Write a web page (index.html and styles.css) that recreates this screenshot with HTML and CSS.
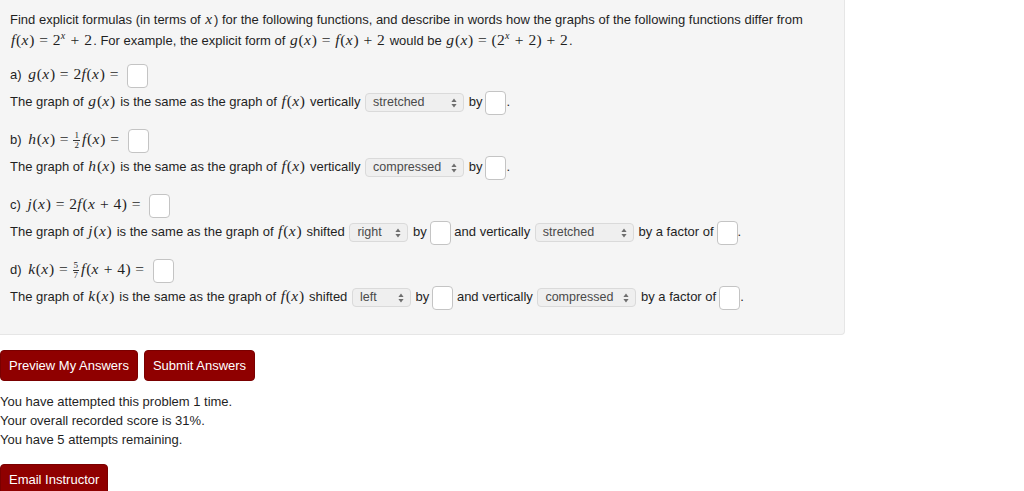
FILE: index.html
```html
<!DOCTYPE html>
<html>
<head>
<meta charset="utf-8">
<link rel="stylesheet" href="styles.css">
</head>
<body>
<div class="problem">
  <p class="intro">Find explicit formulas (in terms of <span class="m"><i>x</i></span>) for the following functions, and describe in words how the graphs of the following functions differ from<br><span class="m"><i>f</i>(<i>x</i>)<span class="op">=</span>2<sup><i>x</i></sup><span class="op">+</span>2</span>. For example, the explicit form of <span class="m"><i>g</i>(<i>x</i>)<span class="op">=</span><i>f</i>(<i>x</i>)<span class="op">+</span>2</span> would be <span class="m"><i>g</i>(<i>x</i>)<span class="op">=</span>(2<sup><i>x</i></sup><span class="op">+</span>2)<span class="op">+</span>2</span>.</p>

  <div class="part">
    <div class="row">a) <span class="m lead"><i>g</i>(<i>x</i>)<span class="op">=</span>2<i>f</i>(<i>x</i>)<span class="op">=</span></span><span class="ans"></span></div>
    <div class="row">The graph of <span class="m"><i>g</i>(<i>x</i>)</span> is the same as the graph of <span class="m"><i>f</i>(<i>x</i>)</span> vertically <span class="sel w-long">stretched<svg class="arr" viewBox="0 0 6 10" width="6" height="10"><path d="M3 0.5 L5.6 4 H0.4 Z M3 9.5 L5.6 6 H0.4 Z" fill="#6e6e6e"/></svg></span> by<span class="ans"></span>.</div>
  </div>

  <div class="part">
    <div class="row">b) <span class="m lead"><i>h</i>(<i>x</i>)<span class="op">=</span><span class="frac"><span>1</span><span>2</span></span><i>f</i>(<i>x</i>)<span class="op">=</span></span><span class="ans"></span></div>
    <div class="row">The graph of <span class="m"><i>h</i>(<i>x</i>)</span> is the same as the graph of <span class="m"><i>f</i>(<i>x</i>)</span> vertically <span class="sel w-long">compressed<svg class="arr" viewBox="0 0 6 10" width="6" height="10"><path d="M3 0.5 L5.6 4 H0.4 Z M3 9.5 L5.6 6 H0.4 Z" fill="#6e6e6e"/></svg></span> by<span class="ans"></span>.</div>
  </div>

  <div class="part">
    <div class="row">c) <span class="m lead"><i>j</i>(<i>x</i>)<span class="op">=</span>2<i>f</i>(<i>x</i><span class="op">+</span>4)<span class="op">=</span></span><span class="ans"></span></div>
    <div class="row">The graph of <span class="m"><i>j</i>(<i>x</i>)</span> is the same as the graph of <span class="m"><i>f</i>(<i>x</i>)</span> shifted <span class="sel w-short">right<svg class="arr" viewBox="0 0 6 10" width="6" height="10"><path d="M3 0.5 L5.6 4 H0.4 Z M3 9.5 L5.6 6 H0.4 Z" fill="#6e6e6e"/></svg></span> by<span class="ans"></span> and vertically <span class="sel w-long">stretched<svg class="arr" viewBox="0 0 6 10" width="6" height="10"><path d="M3 0.5 L5.6 4 H0.4 Z M3 9.5 L5.6 6 H0.4 Z" fill="#6e6e6e"/></svg></span> by a factor of<span class="ans"></span>.</div>
  </div>

  <div class="part">
    <div class="row">d) <span class="m lead"><i>k</i>(<i>x</i>)<span class="op">=</span><span class="frac"><span>5</span><span>7</span></span><i>f</i>(<i>x</i><span class="op">+</span>4)<span class="op">=</span></span><span class="ans"></span></div>
    <div class="row">The graph of <span class="m"><i>k</i>(<i>x</i>)</span> is the same as the graph of <span class="m"><i>f</i>(<i>x</i>)</span> shifted <span class="sel w-short">left<svg class="arr" viewBox="0 0 6 10" width="6" height="10"><path d="M3 0.5 L5.6 4 H0.4 Z M3 9.5 L5.6 6 H0.4 Z" fill="#6e6e6e"/></svg></span> by<span class="ans"></span> and vertically <span class="sel w-long">compressed<svg class="arr" viewBox="0 0 6 10" width="6" height="10"><path d="M3 0.5 L5.6 4 H0.4 Z M3 9.5 L5.6 6 H0.4 Z" fill="#6e6e6e"/></svg></span> by a factor of<span class="ans"></span>.</div>
  </div>
</div>

<div class="buttons">
  <button class="btn">Preview My Answers</button>
  <button class="btn">Submit Answers</button>
</div>

<div class="status">
  <div>You have attempted this problem 1 time.</div>
  <div>Your overall recorded score is 31%.</div>
  <div>You have 5 attempts remaining.</div>
</div>

<div class="buttons email">
  <button class="btn">Email Instructor</button>
</div>
</body>
</html>
```

FILE: styles.css
```css
html, body {
  margin: 0;
  padding: 0;
  background: #ffffff;
}
body {
  font-family: "Liberation Sans", Arial, sans-serif;
  font-size: 13px;
  color: #1f1f1f;
}
.problem {
  width: 834px;
  background: #f5f5f5;
  border-right: 1px solid #e6e6e6;
  border-bottom: 1px solid #e6e6e6;
  border-bottom-right-radius: 4px;
  padding: 9px 0 14px 10px;
}
.intro {
  margin: 0 0 9px 0;
  line-height: 20px;
}
.part {
  margin-bottom: 11px;
}
.row {
  height: 27px;
  line-height: 27px;
  white-space: nowrap;
}
.m {
  font-family: "Liberation Serif", "Times New Roman", serif;
  font-size: 15.5px;
  white-space: nowrap;
  letter-spacing: 0.3px;
  padding: 0 1px;
}
.m.lead {
  margin-left: 2px;
}
.m i {
  font-style: italic;
  padding-right: 0.5px;
}
.m sup {
  font-size: 10px;
  vertical-align: 6px;
  line-height: 0;
}
.op {
  margin: 0 4.5px;
}
.frac {
  display: inline-flex;
  flex-direction: column;
  align-items: center;
  font-size: 9px;
  line-height: 7px;
  vertical-align: 6px;
  margin-right: 2px;
  letter-spacing: 0;
}
.frac span:first-child {
  border-bottom: 1px solid #333;
  padding: 0 1px 1px;
}
.frac span:last-child {
  padding-top: 1px;
}
.ans {
  display: inline-block;
  box-sizing: border-box;
  width: 21px;
  height: 24px;
  background: #ffffff;
  border: 1px solid #c4c4c4;
  border-radius: 4px;
  margin-left: 3px;
  vertical-align: middle;
}
.sel {
  display: inline-flex;
  align-items: center;
  justify-content: space-between;
  box-sizing: border-box;
  height: 19px;
  line-height: 17px;
  padding: 0 6px 0 7px;
  background: #efefef;
  border: 1px solid #dadada;
  border-radius: 4px;
  color: #4a4a4a;
  font-size: 12.5px;
  vertical-align: middle;
  margin: 0 1px 0 1px;
}
.w-long { width: 99px; }
.w-short { width: 59px; }
.arr { flex: none; }
.buttons {
  display: flex;
  gap: 6px;
  margin-top: 15px;
}
.btn {
  font-family: "Liberation Sans", Arial, sans-serif;
  font-size: 13px;
  color: #ffffff;
  background: #8f0000;
  border: 1px solid #7a0000;
  border-radius: 4px;
  height: 31px;
  padding: 0 8px;
}
.status {
  margin-top: 11px;
  line-height: 19px;
}
.email {
  margin-top: 15px;
}
```
